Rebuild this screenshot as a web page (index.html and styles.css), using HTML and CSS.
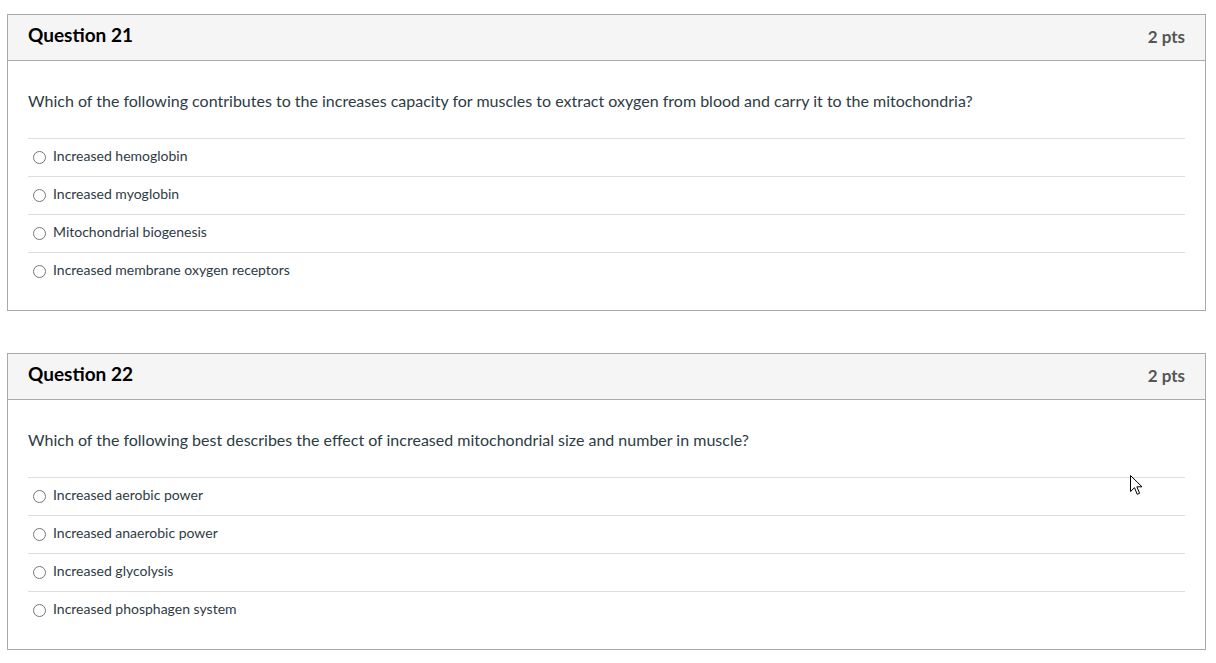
FILE: index.html
```html
<!DOCTYPE html>
<html>
<head>
<meta charset="utf-8">
<link rel="stylesheet" href="styles.css">
</head>
<body>
<div class="quiz">
  <div class="question">
    <div class="q-header">
      <span class="q-title">Question 21</span>
      <span class="q-pts">2 pts</span>
    </div>
    <div class="q-body">
      <div class="q-text">Which of the following contributes to the increases capacity for muscles to extract oxygen from blood and carry it to the mitochondria?</div>
      <div class="answers">
        <label class="answer"><span class="radio"></span>Increased hemoglobin</label>
        <label class="answer"><span class="radio"></span>Increased myoglobin</label>
        <label class="answer"><span class="radio"></span>Mitochondrial biogenesis</label>
        <label class="answer"><span class="radio"></span>Increased membrane oxygen receptors</label>
      </div>
    </div>
  </div>
  <div class="question">
    <div class="q-header">
      <span class="q-title">Question 22</span>
      <span class="q-pts">2 pts</span>
    </div>
    <div class="q-body">
      <div class="q-text">Which of the following best describes the effect of increased mitochondrial size and number in muscle?</div>
      <div class="answers">
        <label class="answer"><span class="radio"></span>Increased aerobic power</label>
        <label class="answer"><span class="radio"></span>Increased anaerobic power</label>
        <label class="answer"><span class="radio"></span>Increased glycolysis</label>
        <label class="answer"><span class="radio"></span>Increased phosphagen system</label>
      </div>
    </div>
  </div>
</div>
<svg class="cursor" width="13" height="21" viewBox="0 0 13 21"><path d="M0.5 0.5 L0.5 16.5 L4.5 12.7 L7.2 19.3 L9.6 18.3 L6.9 11.8 L12 11.8 Z" fill="#fff" stroke="#000" stroke-width="1" stroke-linejoin="miter"/></svg>
</body>
</html>
```

FILE: styles.css
```css
html, body {
  margin: 0;
  padding: 0;
  background: #fff;
}
body {
  font-family: Lato, "Liberation Sans", sans-serif;
  color: #2d3b45;
}
.quiz {
  padding: 14px 0 0 7px;
}
.question {
  width: 1199px;
  box-sizing: border-box;
  border: 1px solid #aaaaaa;
  margin-bottom: 42px;
}
.q-header {
  height: 46px;
  box-sizing: border-box;
  background: #f5f5f5;
  border-bottom: 1px solid #aaaaaa;
  display: flex;
  justify-content: space-between;
  align-items: center;
  padding: 0 20px 6px;
}
.q-title {
  font-size: 19px;
  font-weight: 700;
  color: #000;
}
.q-pts {
  font-size: 17px;
  font-weight: 700;
  color: #555;
  padding-top: 3px;
}
.q-body {
  padding: 0 20px 20px;
}
.q-text {
  padding-top: 30px;
  font-size: 16px;
  line-height: 20px;
  height: 20px;
  margin-bottom: 27px;
  color: #2d3b45;
}
.answer {
  display: flex;
  align-items: center;
  height: 38px;
  box-sizing: border-box;
  border-top: 1px solid #dddddd;
  padding-bottom: 5px;
  font-size: 14px;
  color: #2d3b45;
}
.radio {
  width: 11px;
  height: 11px;
  border: 1px solid #767676;
  border-radius: 50%;
  margin: 4px 7px 0 5px;
  flex: none;
}
.cursor {
  position: absolute;
  left: 1130px;
  top: 475px;
}
```
